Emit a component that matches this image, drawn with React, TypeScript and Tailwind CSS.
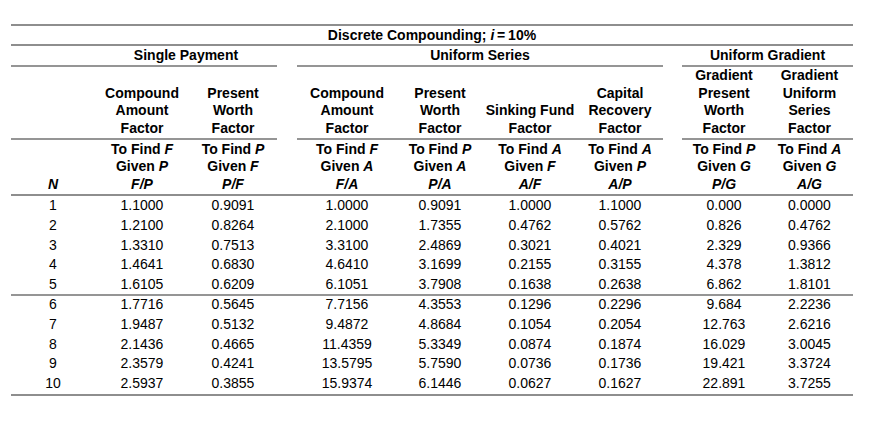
const cols =
  "grid grid-cols-[84px_94px_88px_20px_100px_86px_94px_86px_19px_84px_87px]";

type Sub = { find: string; given: string; code: string };

const factorHeads: { col: string; lines: string[] }[] = [
  { col: "col-start-2", lines: ["Compound", "Amount", "Factor"] },
  { col: "col-start-3", lines: ["Present", "Worth", "Factor"] },
  { col: "col-start-5", lines: ["Compound", "Amount", "Factor"] },
  { col: "col-start-6", lines: ["Present", "Worth", "Factor"] },
  { col: "col-start-7", lines: ["Sinking Fund", "Factor"] },
  { col: "col-start-8", lines: ["Capital", "Recovery", "Factor"] },
  { col: "col-start-10", lines: ["Gradient", "Present", "Worth", "Factor"] },
  { col: "col-start-11", lines: ["Gradient", "Uniform", "Series", "Factor"] },
];

const subHeads: (Sub & { col: string })[] = [
  { col: "col-start-2", find: "F", given: "P", code: "F/P" },
  { col: "col-start-3", find: "P", given: "F", code: "P/F" },
  { col: "col-start-5", find: "F", given: "A", code: "F/A" },
  { col: "col-start-6", find: "P", given: "A", code: "P/A" },
  { col: "col-start-7", find: "A", given: "F", code: "A/F" },
  { col: "col-start-8", find: "A", given: "P", code: "A/P" },
  { col: "col-start-10", find: "P", given: "G", code: "P/G" },
  { col: "col-start-11", find: "A", given: "G", code: "A/G" },
];

const rows: string[][] = [
  ["1", "1.1000", "0.9091", "1.0000", "0.9091", "1.0000", "1.1000", "0.000", "0.0000"],
  ["2", "1.2100", "0.8264", "2.1000", "1.7355", "0.4762", "0.5762", "0.826", "0.4762"],
  ["3", "1.3310", "0.7513", "3.3100", "2.4869", "0.3021", "0.4021", "2.329", "0.9366"],
  ["4", "1.4641", "0.6830", "4.6410", "3.1699", "0.2155", "0.3155", "4.378", "1.3812"],
  ["5", "1.6105", "0.6209", "6.1051", "3.7908", "0.1638", "0.2638", "6.862", "1.8101"],
  ["6", "1.7716", "0.5645", "7.7156", "4.3553", "0.1296", "0.2296", "9.684", "2.2236"],
  ["7", "1.9487", "0.5132", "9.4872", "4.8684", "0.1054", "0.2054", "12.763", "2.6216"],
  ["8", "2.1436", "0.4665", "11.4359", "5.3349", "0.0874", "0.1874", "16.029", "3.0045"],
  ["9", "2.3579", "0.4241", "13.5795", "5.7590", "0.0736", "0.1736", "19.421", "3.3724"],
  ["10", "2.5937", "0.3855", "15.9374", "6.1446", "0.0627", "0.1627", "22.891", "3.7255"],
];

const dataCols = [
  "col-start-1",
  "col-start-2",
  "col-start-3",
  "col-start-5",
  "col-start-6",
  "col-start-7",
  "col-start-8",
  "col-start-10",
  "col-start-11",
];

function Rule() {
  return <div className="h-[2px] bg-[#8e8e8e]" />;
}

function GroupRule() {
  return (
    <div className={cols}>
      <div className="col-span-3 col-start-1 h-[2px] bg-[#959595]" />
      <div className="col-span-4 col-start-5 h-[2px] bg-[#959595]" />
      <div className="col-span-2 col-start-10 h-[2px] bg-[#959595]" />
    </div>
  );
}

function DataRow({ cells }: { cells: string[] }) {
  return (
    <div className={`${cols} h-[19.8px] items-center leading-[19.8px]`}>
      {cells.map((c, i) => (
        <div key={i} className={`${dataCols[i]} text-center`}>
          {c}
        </div>
      ))}
    </div>
  );
}

export default function App() {
  return (
    <div className="min-h-screen bg-white pl-[11px] pt-[24px]">
      <div className="w-[842px] font-['Liberation_Sans',Arial,sans-serif] text-[14px] text-black">
        <Rule />
        <div className="flex h-[18px] items-center justify-center font-bold leading-[18px]">
          Discrete Compounding;&nbsp;<i>i</i>&thinsp;=&thinsp;10%
        </div>
        <Rule />

        <div className={`${cols} h-[19px] items-center font-bold leading-[19px]`}>
          <div className="col-span-2 col-start-2 text-center">Single Payment</div>
          <div className="col-span-4 col-start-5 text-center">Uniform Series</div>
          <div className="col-span-2 col-start-10 text-center">Uniform Gradient</div>
        </div>
        <GroupRule />

        <div className={`${cols} h-[71px] items-end pb-[1px] font-bold leading-[17.5px]`}>
          {factorHeads.map((h) => (
            <div key={h.col} className={`${h.col} row-start-1 text-center`}>
              {h.lines.map((l) => (
                <div key={l}>{l}</div>
              ))}
            </div>
          ))}
        </div>
        <GroupRule />

        <div className={`${cols} h-[54px] items-end pb-[1px] font-bold leading-[17.5px]`}>
          <div className="col-start-1 row-start-1 text-center">
            <i>N</i>
          </div>
          {subHeads.map((s) => (
            <div key={s.col} className={`${s.col} row-start-1 text-center`}>
              <div>
                To Find <i>{s.find}</i>
              </div>
              <div>
                Given <i>{s.given}</i>
              </div>
              <div>
                <i>{s.code}</i>
              </div>
            </div>
          ))}
        </div>
        <Rule />

        {rows.slice(0, 5).map((r) => (
          <DataRow key={r[0]} cells={r} />
        ))}
        <div className="relative z-10 -my-px h-[2px] bg-[#959595]" />
        {rows.slice(5).map((r) => (
          <DataRow key={r[0]} cells={r} />
        ))}
        <Rule />
      </div>
    </div>
  );
}
